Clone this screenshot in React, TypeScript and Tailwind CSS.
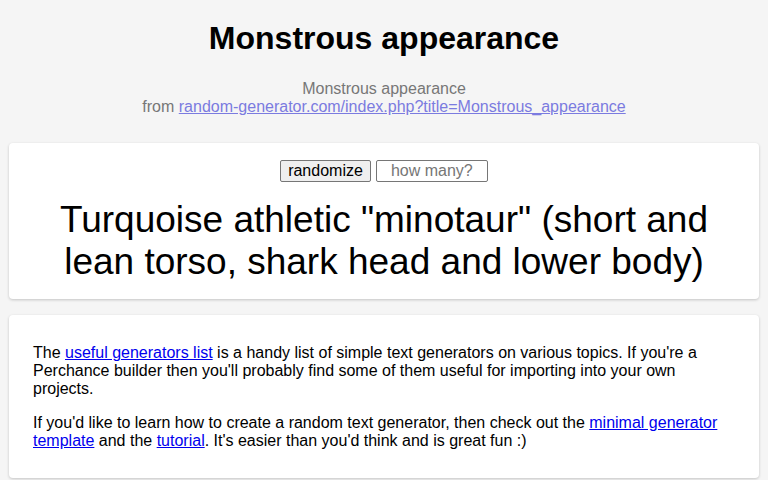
import React, {useState} from "react";

const App = () => {
    const [count, setCount] = useState("");

    return (
        <div className="min-h-screen bg-[#f5f5f5] text-black font-['Liberation_Sans',Arial,sans-serif] text-[16px] leading-[18px]">
            <div className="pt-[20px] pb-[27px] text-center">
                <h1 className="text-[32px] leading-[37px] font-bold">Monstrous appearance</h1>
                <div className="mt-[23px] text-[#777777]">
                    <div>Monstrous appearance</div>
                    <div>
                        from{" "}
                        <a href="#" className="text-[#7b7be0] underline">
                            random-generator.com/index.php?title=Monstrous_appearance
                        </a>
                    </div>
                </div>
            </div>

            <div className="mx-[9px] bg-white rounded-[4px] shadow-[0_1px_3px_rgba(0,0,0,0.2)] pt-[17px] pb-[16px] px-[40px] text-center">
                <div className="flex justify-center gap-[5px]">
                    <button className="h-[22px] px-[7px] bg-[#efefef] border border-[#767676] rounded-[2px] text-[16px] leading-[18px] text-black">
                        randomize
                    </button>
                    <input
                        value={count}
                        onChange={(e) => setCount(e.target.value)}
                        placeholder="how many?"
                        className="h-[22px] w-[112px] px-2 border border-[#767676] rounded-[2px] text-center text-[16px] placeholder:text-[#767676] outline-none"
                    />
                </div>
                <div className="mt-[17px] text-[37px] leading-[42px]">
                    Turquoise athletic "minotaur" (short and lean torso, shark head and lower body)
                </div>
            </div>

            <div className="mx-[9px] mt-[16px] bg-white rounded-[4px] shadow-[0_1px_3px_rgba(0,0,0,0.2)] px-[24px] pt-[29px] pb-[28px]">
                <p>
                    The <a href="#" className="text-[#0000ee] underline">useful generators list</a> is a handy list of simple text generators on various topics. If you're a Perchance builder then you'll probably find some of them useful for importing into your own projects.
                </p>
                <p className="mt-[16px]">
                    If you'd like to learn how to create a random text generator, then check out the{" "}
                    <a href="#" className="text-[#0000ee] underline">minimal generator template</a> and the{" "}
                    <a href="#" className="text-[#0000ee] underline">tutorial</a>. It's easier than you'd think and is great fun :)
                </p>
            </div>
        </div>
    );
};

export default App;
